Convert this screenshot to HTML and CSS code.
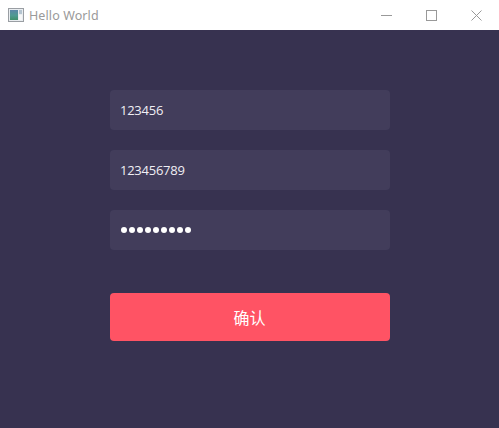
FILE: index.html
```html
<!DOCTYPE html>
<html lang="zh">
<head>
<meta charset="utf-8">
<title>Hello World</title>
<link rel="stylesheet" href="styles.css">
</head>
<body>
<div class="window">
  <header class="titlebar">
    <svg class="app-icon" width="16" height="14" viewBox="0 0 16 14">
      <defs>
        <linearGradient id="pane" x1="0" y1="0" x2="0" y2="1">
          <stop offset="0" stop-color="#5b86a8"/>
          <stop offset="0.55" stop-color="#4f9a92"/>
          <stop offset="1" stop-color="#3f8f6a"/>
        </linearGradient>
      </defs>
      <rect x="0.5" y="0.5" width="15" height="13" fill="#e9edf0" stroke="#9a9ea3"/>
      <rect x="2" y="2" width="8" height="10" fill="url(#pane)"/>
      <rect x="11" y="2" width="3" height="4" fill="#b4c4d0"/>
      <rect x="11" y="7" width="3" height="5" fill="#f6f7f8"/>
    </svg>
    <span class="title">Hello World</span>
    <div class="controls">
      <button class="ctl"><svg width="11" height="11" viewBox="0 0 11 11"><path d="M0 5.5H11" stroke="#999" stroke-width="1"/></svg></button>
      <button class="ctl"><svg width="11" height="11" viewBox="0 0 11 11"><rect x="0.5" y="0.5" width="10" height="10" fill="none" stroke="#999"/></svg></button>
      <button class="ctl"><svg width="11" height="11" viewBox="0 0 11 11"><path d="M0.5 0.5L10.5 10.5M10.5 0.5L0.5 10.5" stroke="#999" stroke-width="1"/></svg></button>
    </div>
  </header>
  <main class="content">
    <form class="form">
      <div class="field">123456</div>
      <div class="field">123456789</div>
      <div class="field dots"><i></i><i></i><i></i><i></i><i></i><i></i><i></i><i></i><i></i></div>
      <button class="submit" type="button">确认</button>
    </form>
  </main>
</div>
</body>
</html>
```
FILE: styles.css
```css
* { box-sizing: border-box; }
html, body { margin: 0; height: 100%; }
body { font-family: "Noto Sans CJK SC", "Noto Sans", sans-serif; overflow: hidden; }
.window { width: 499px; height: 428px; display: flex; flex-direction: column; background: #373250; }
.titlebar { height: 30px; flex: none; background: #fff; display: flex; align-items: center; padding-left: 8px; }
.app-icon { flex: none; margin-top: -1px; }
.title { margin-left: 5px; font-size: 12.5px; color: #9a9a9a; font-family: "Noto Sans", sans-serif; letter-spacing: 0.1px; }
.controls { margin-left: auto; display: flex; }
.ctl { width: 45px; height: 30px; border: 0; padding: 0; background: none; display: flex; align-items: center; justify-content: center; }
.content { flex: 1; display: flex; justify-content: center; padding-top: 60px; }
.form { width: 280px; display: flex; flex-direction: column; gap: 20px; }
.field { height: 40px; border-radius: 4px; background: #423d5b; color: #f0eef4; font-size: 13px; padding-left: 10.5px; padding-bottom: 1px; display: flex; align-items: center; font-family: "Open Sans", sans-serif; letter-spacing: -0.25px; }
.dots { gap: 2px; padding-left: 11px; padding-bottom: 0; }
.dots i { width: 6px; height: 6px; border-radius: 50%; background: #fff; }
.submit { margin-top: 23px; height: 48px; border: 0; border-radius: 4px; background: #ff5364; color: #fff; font-size: 16px; font-family: "Noto Sans CJK SC", sans-serif; }
```
